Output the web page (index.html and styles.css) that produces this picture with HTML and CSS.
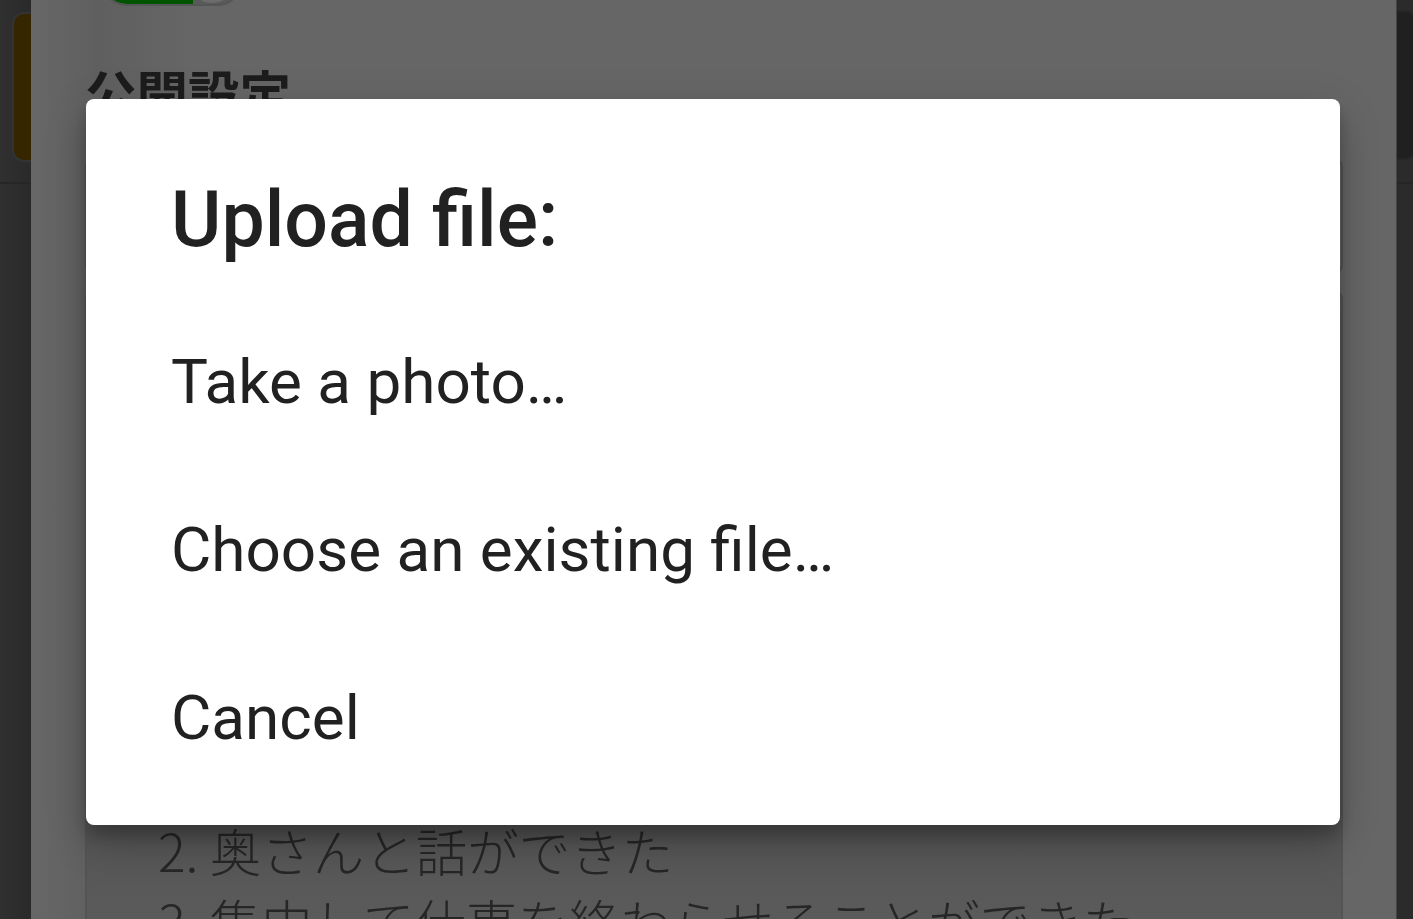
FILE: index.html
```html
<!DOCTYPE html>
<html lang="ja">
<head>
<meta charset="utf-8">
<title>Upload file</title>
<link rel="stylesheet" href="styles.css">
</head>
<body>
<div class="page">
  <aside class="side side-left">
    <div class="side-top">
      <div class="side-btn orange"></div>
    </div>
  </aside>
  <main class="panel">
    <div class="toggle"><span class="toggle-on"></span><span class="toggle-knob"></span></div>
    <h2 class="heading">公開設定</h2>
    <div class="field field-short"></div>
    <div class="field field-long">
      <p class="line">今日の振り返り</p>
      <p class="line">よかったこと</p>
      <p class="line">・朝の散歩</p>
      <p class="line">・読書</p>
      <p class="line">・早めの就寝</p>
      <p class="line">できたこと</p>
      <p class="line">1. 早起きできた</p>
      <p class="line">2. 奥さんと話ができた</p>
      <p class="line">3. 集中して仕事を終わらせることができた</p>
    </div>
  </main>
  <aside class="side side-right">
    <div class="side-top">
      <div class="side-btn dark"></div>
    </div>
  </aside>
</div>
<div class="overlay">
  <div class="dialog">
    <h1 class="dialog-title">Upload file:</h1>
    <div class="dialog-item">Take a photo…</div>
    <div class="dialog-item">Choose an existing file…</div>
    <div class="dialog-item">Cancel</div>
  </div>
</div>
</body>
</html>
```
FILE: styles.css
```css
html, body {
  margin: 0;
  padding: 0;
  width: 1413px;
  height: 919px;
  overflow: hidden;
  background: #2c2c2c;
}
.page {
  display: flex;
  width: 1413px;
  height: 919px;
}
.side {
  flex: none;
  overflow: hidden;
}
.side-left {
  width: 31px;
  background: linear-gradient(90deg, #303030, #2a2a2a);
}
.side-right {
  width: 17px;
  background: #2b2b2b;
  border-left: 1px solid #444;
  box-sizing: border-box;
}
.side-top {
  height: 184px;
  border-bottom: 2px solid #262626;
  box-sizing: border-box;
  padding-top: 12px;
}
.side-left .side-top { padding-left: 12px; }
.side-btn {
  height: 150px;
  width: 60px;
  border-radius: 12px;
  box-sizing: border-box;
}
.side-btn.orange {
  background: #362600;
  border: 2px solid #333;
}
.side-btn.dark {
  background: #202020;
  border: 2px solid #262626;
  margin-left: -40px;
  margin-top: -2px;
}
.panel {
  flex: 1;
  background: linear-gradient(90deg, #676767 0%, #5f5f5f 5%, #666 12%, #666 100%);
  padding-left: 54px;
  padding-right: 53px;
  display: flex;
  flex-direction: column;
  overflow: hidden;
  font-family: "Noto Sans CJK JP", "Noto Sans", sans-serif;
  color: #232323;
}
.panel > * {
  flex: none;
}
.toggle {
  width: 142px;
  height: 52px;
  margin: -46px 0 0 16px;
  border-radius: 26px;
  background: #5a5a5a;
  border: 2px solid #555;
  display: flex;
  align-items: center;
  box-sizing: border-box;
  overflow: hidden;
}
.toggle-on {
  width: 90px;
  height: 100%;
  background: #005400;
  border-radius: 24px 0 0 24px;
}
.toggle-knob {
  width: 46px;
  height: 46px;
  border-radius: 50%;
  background: #6c6c6c;
  margin-left: -4px;
}
.heading {
  margin: 56px 0 0 0;
  font-size: 51.5px;
  line-height: 60px;
  font-weight: 700;
  color: #1c1c1c;
}
.field {
  border: 2px solid #545454;
  border-radius: 10px;
  box-sizing: border-box;
}
.field-short {
  margin-top: 35px;
  height: 118px;
}
.field-long {
  margin-top: 14px;
  height: 700px;
  padding: 26px 0 0 71px;
  background: linear-gradient(180deg, #5a5a5a 0%, #555 75%, #5e5e5e 100%);
}
.line {
  margin: 0;
  font-size: 51.5px;
  line-height: 71px;
  font-weight: 300;
  color: #262626;
  white-space: nowrap;
}
.overlay {
  position: fixed;
  inset: 0;
  padding: 99px 73px 0 86px;
}
.dialog {
  width: 1254px;
  height: 726px;
  box-sizing: border-box;
  background: #fff;
  border-radius: 8px;
  padding: 71px 0 0 85px;
  font-family: Roboto, "Noto Sans", sans-serif;
  color: #212121;
  box-shadow: 0 24px 38px rgba(0,0,0,0.14), 0 9px 46px rgba(0,0,0,0.12), 0 11px 15px rgba(0,0,0,0.2);
}
.dialog-title {
  margin: 0 0 28px 0;
  font-size: 77px;
  line-height: 100px;
  font-weight: 500;
}
.dialog-item {
  font-size: 62px;
  line-height: 168px;
  height: 168px;
}
```
